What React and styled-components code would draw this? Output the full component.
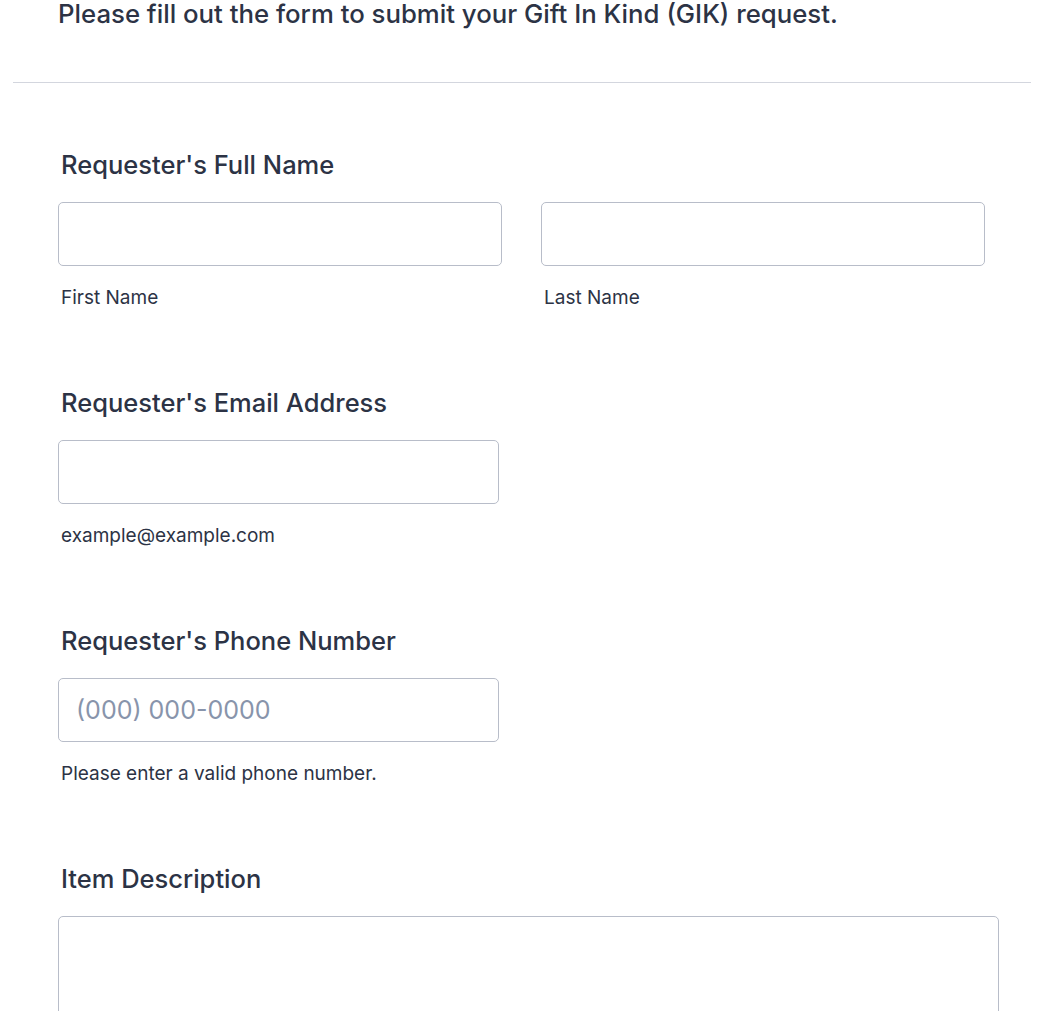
import React from 'react';
import styled, { createGlobalStyle } from 'styled-components';

const GlobalStyle = createGlobalStyle`
  body {
    margin: 0;
    background: #ffffff;
    font-family: Inter, "Noto Sans", sans-serif;
    color: #2c3345;
  }
`;

const Page = styled.div`
  width: 1044px;
  padding: 0 13px;
  box-sizing: border-box;
`;

const Intro = styled.div`
  padding-left: 45px;
  font-size: 25.75px;
  line-height: 28px;
  font-weight: 500;
  color: #2c3345;
`;

const Divider = styled.hr`
  margin: 54px 0 0;
  border: none;
  border-top: 1px solid #d3d6de;
`;

const Form = styled.div`
  display: flex;
  flex-direction: column;
  gap: 79px;
  padding: 67px 0 0 45px;
`;

const Field = styled.div`
  display: flex;
  flex-direction: column;
`;

const Label = styled.div`
  padding-left: 3px;
  font-size: 25.5px;
  line-height: 30px;
  font-weight: 500;
  margin-bottom: 22px;
`;

const Row = styled.div`
  display: flex;
  gap: 39px;
`;

const Column = styled.div`
  display: flex;
  flex-direction: column;
  width: ${(p) => p.$width || 444}px;
`;

const Input = styled.input`
  box-sizing: border-box;
  width: 100%;
  height: 64px;
  border: 1px solid #b8bdc9;
  border-radius: 5px;
  padding: 0 17px;
  font-family: Inter, "Noto Sans", sans-serif;
  font-size: 25px;
  color: #2c3345;
  outline: none;

  &::placeholder {
    color: #8894ab;
  }
`;

const TextArea = styled.textarea`
  box-sizing: border-box;
  width: 941px;
  height: 180px;
  border: 1px solid #b8bdc9;
  border-radius: 5px;
  resize: none;
  outline: none;
`;

const Sub = styled.div`
  margin-top: 20px;
  padding-left: 3px;
  font-size: 19px;
  line-height: 23px;
  color: #2c3345;
`;

export default function App() {
  return (
    <>
      <GlobalStyle />
      <Page>
        <Intro>Please fill out the form to submit your Gift In Kind (GIK) request.</Intro>
        <Divider />
        <Form>
          <Field>
            <Label>Requester's Full Name</Label>
            <Row>
              <Column>
                <Input type="text" />
                <Sub>First Name</Sub>
              </Column>
              <Column>
                <Input type="text" />
                <Sub>Last Name</Sub>
              </Column>
            </Row>
          </Field>
          <Field>
            <Label>Requester's Email Address</Label>
            <Column $width={441}>
              <Input type="email" />
              <Sub>example@example.com</Sub>
            </Column>
          </Field>
          <Field>
            <Label>Requester's Phone Number</Label>
            <Column $width={441}>
              <Input type="tel" placeholder="(000) 000-0000" />
              <Sub>Please enter a valid phone number.</Sub>
            </Column>
          </Field>
          <Field>
            <Label>Item Description</Label>
            <TextArea />
          </Field>
        </Form>
      </Page>
    </>
  );
}
